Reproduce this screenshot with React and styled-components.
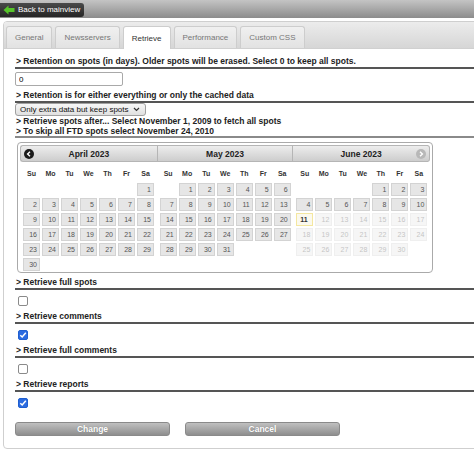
import React from 'react'
import styled, { createGlobalStyle, css } from 'styled-components'

const Global = createGlobalStyle`
  html, body { margin:0; padding:0; background:#fff; overflow:hidden; }
  body { font-family:"Liberation Sans", Arial, sans-serif; font-size:8px; color:#222; }
`
const TopBar = styled.div`
  height:18px;
  background:linear-gradient(#c4c4c4, #8c8c8c);
  display:flex;
  align-items:center;
`
const BackButton = styled.div`
  height:14px;
  width:84px;
  margin-top:1px;
  background:linear-gradient(#4a4a4a, #262626);
  border-radius:0 3px 3px 0;
  display:flex;
  align-items:center;
  gap:3px;
  padding-left:3px;
  box-sizing:border-box;
  color:#fff;
  font-size:8px;
`
const Panel = styled.div`
  margin:3px -12px 0 3px;
  border:1px solid #cfcfcf;
  border-radius:4px;
  padding:0 0 12px 0;
`
const TabBar = styled.div`
  height:27px;
  background:linear-gradient(#ececec, #d6d6d6);
  border-bottom:1px solid #d0d0d0;
  border-radius:3px 3px 0 0;
  display:flex;
  align-items:flex-end;
  gap:3px;
  padding-left:2px;
  box-sizing:border-box;
`
const Tab = styled.div`
  padding:0 8px;
  display:flex;
  align-items:center;
  border:1px solid #cdcdcd;
  border-bottom:none;
  border-radius:3px 3px 0 0;
  background:${p => (p.$active ? '#fff' : 'linear-gradient(#f0f0f0, #e2e2e2)')};
  color:${p => (p.$active ? '#333' : '#777')};
  margin-bottom:${p => (p.$active ? '-1px' : '0')};
  height:${p => (p.$active ? '23px' : '22px')};
  box-sizing:border-box;
`
const Content = styled.div`
  padding:6px 0 0 11px;
`
const Heading = styled.div`
  font-weight:bold;
  font-size:8.5px;
  line-height:${p => p.$lh || 12}px;
  color:#222;
  border-bottom:2px solid ${p => p.$light ? '#8a8a8a' : '#555'};
  padding-left:1px;
`
const Input = styled.input`
  display:block;
  width:108px;
  height:14px;
  box-sizing:border-box;
  margin:3px 0 3px 0;
  border:1px solid #a9a9a9;
  border-radius:2px;
  font:8px "Liberation Sans", Arial, sans-serif;
  padding:0 3px;
`
const SelectBox = styled.div`
  width:131px;
  height:13px;
  box-sizing:border-box;
  border:1px solid #a0a0a0;
  border-radius:3px;
  background:linear-gradient(#f7f7f7, #e0e0e0);
  display:flex;
  align-items:center;
  justify-content:space-between;
  padding:0 5px 0 4px;
  font-size:8px;
  color:#111;
`
const Calendar = styled.div`
  margin:4px 0 0 2px;
  width:416px;
  box-sizing:border-box;
  border:1px solid #aaa;
  border-radius:4px;
  padding:2px 2px 1px 2px;
  display:flex;
`
const Month = styled.div`
  flex:1;
`
const MonthHeader = styled.div`
  position:relative;
  height:17px;
  box-sizing:border-box;
  border:1px solid #b5b5b5;
  ${p => p.$pos === 'first' && css`border-radius:3px 0 0 3px; border-right:none;`}
  ${p => p.$pos === 'last' && css`border-radius:0 3px 3px 0; border-left:none;`}
  background:linear-gradient(#ededed, #cdcdcd);
  display:flex;
  align-items:center;
  justify-content:center;
  font-weight:bold;
  font-size:8.5px;
  color:#222;
`
const NavIcon = styled.div`
  position:absolute;
  top:3px;
  ${p => p.$side}:3px;
  width:10px;
  height:10px;
  border-radius:50%;
  background:${p => p.$disabled ? '#b8b8b8' : '#1a1a1a'};
  display:flex;
  align-items:center;
  justify-content:center;
`
const Grid = styled.div`
  display:grid;
  grid-template-columns:repeat(7, 17px);
  grid-auto-rows:13px;
  column-gap:2px;
  row-gap:2px;
  margin-left:3px;
`
const DayNames = styled(Grid)`
  grid-auto-rows:16px;
  margin-top:3px;
  margin-bottom:2px;
`
const DayName = styled.div`
  font-weight:bold;
  font-size:7px;
  display:flex;
  align-items:center;
  justify-content:center;
  color:#333;
`
const Day = styled.div`
  border:1px solid ${p => p.$today ? '#f4e7a0' : '#d3d3d3'};
  background:${p => p.$today ? '#fbf9ee' : '#e6e6e6'};
  color:${p => p.$today ? '#363636' : '#555'};
  font-size:7px;
  text-align:right;
  padding-right:2px;
  line-height:11px;
  opacity:${p => p.$disabled ? 0.35 : 1};
  ${p => p.$today && css`text-align:left; padding-left:3px; font-weight:bold; color:#333;`}
`
const Empty = styled.div``
const Spacer = styled.div`
  height:3px;
`
const CheckBox = styled.div`
  width:10px;
  height:10px;
  box-sizing:border-box;
  margin:6px 0 4px 3px;
  border-radius:2px;
  border:1px solid ${p => p.$checked ? '#1f5fd0' : '#8a8a8a'};
  background:${p => p.$checked ? '#2b6be0' : '#fff'};
  display:flex;
  align-items:center;
  justify-content:center;
`
const Buttons = styled.div`
  display:flex;
  gap:15px;
  margin-top:14px;
`
const Button = styled.div`
  width:155px;
  height:14px;
  box-sizing:border-box;
  border:1px solid #8a8a8a;
  border-radius:3px;
  background:linear-gradient(#c0c0c0, #8e8e8e);
  color:#fff;
  font-weight:bold;
  font-size:8.5px;
  display:flex;
  align-items:center;
  justify-content:center;
  text-shadow:0 0 1px rgba(0,0,0,.3);
`

const months = [
  { name: 'April 2023', start: 6, days: 30 },
  { name: 'May 2023', start: 1, days: 31 },
  { name: 'June 2023', start: 4, days: 30 },
]
const dayNames = ['Su', 'Mo', 'Tu', 'We', 'Th', 'Fr', 'Sa']

const MonthView = ({ m, pos }) => {
  const cells = []
  for (let i = 0; i < m.start; i++) cells.push(<Empty key={'e' + i} />)
  for (let d = 1; d <= m.days; d++) {
    const june = m.name.startsWith('June')
    cells.push(
      <Day key={d} $today={june && d === 11} $disabled={june && d > 11}>{d}</Day>
    )
  }
  return (
    <Month>
      <MonthHeader $pos={pos}>
        {pos === 'first' && (
          <NavIcon $side="left">
            <svg width="6" height="6" viewBox="0 0 6 6"><path d="M4 0.8 L1.6 3 L4 5.2" stroke="#fff" strokeWidth="1.4" fill="none" /></svg>
          </NavIcon>
        )}
        {m.name}
        {pos === 'last' && (
          <NavIcon $side="right" $disabled>
            <svg width="6" height="6" viewBox="0 0 6 6"><path d="M2 0.8 L4.4 3 L2 5.2" stroke="#fff" strokeWidth="1.4" fill="none" /></svg>
          </NavIcon>
        )}
      </MonthHeader>
      <DayNames>
        {dayNames.map(n => <DayName key={n}>{n}</DayName>)}
      </DayNames>
      <Grid>{cells}</Grid>
    </Month>
  )
}

const Check = ({ checked }) => (
  <CheckBox $checked={checked}>
    {checked && (
      <svg width="8" height="8" viewBox="0 0 8 8"><path d="M1.3 4.2 L3.2 6 L6.8 1.8" stroke="#fff" strokeWidth="1.5" fill="none" /></svg>
    )}
  </CheckBox>
)

const App = () => {
  return (
    <>
      <Global />
      <TopBar>
        <BackButton>
          <svg width="12" height="10" viewBox="0 0 12 10">
            <path d="M0.5 5 L5.5 0.5 L5.5 3 L11.5 3 L11.5 7 L5.5 7 L5.5 9.5 Z" fill="#56c42a" />
          </svg>
          Back to mainview
        </BackButton>
      </TopBar>
      <Panel>
        <TabBar>
          <Tab>General</Tab>
          <Tab>Newsservers</Tab>
          <Tab $active>Retrieve</Tab>
          <Tab>Performance</Tab>
          <Tab>Custom CSS</Tab>
        </TabBar>
        <Content>
          <Heading>&gt; Retention on spots (in days). Older spots will be erased. Select 0 to keep all spots.</Heading>
          <Input defaultValue="0" />
          <Heading>&gt; Retention is for either everything or only the cached data</Heading>
          <SelectBox>
            Only extra data but keep spots
            <svg width="7" height="5" viewBox="0 0 7 5"><path d="M1 1 L3.5 3.5 L6 1" stroke="#333" strokeWidth="1.2" fill="none" /></svg>
          </SelectBox>
          <Heading $lh={10} $light>
            &gt; Retrieve spots after... Select November 1, 2009 to fetch all spots<br />
            &gt; To skip all FTD spots select November 24, 2010
          </Heading>
          <Calendar>
            <MonthView m={months[0]} pos="first" />
            <MonthView m={months[1]} pos="mid" />
            <MonthView m={months[2]} pos="last" />
          </Calendar>
          <Spacer />
          <Heading>&gt; Retrieve full spots</Heading>
          <Check />
          <Heading>&gt; Retrieve comments</Heading>
          <Check checked />
          <Heading>&gt; Retrieve full comments</Heading>
          <Check />
          <Heading>&gt; Retrieve reports</Heading>
          <Check checked />
          <Buttons>
            <Button>Change</Button>
            <Button>Cancel</Button>
          </Buttons>
        </Content>
      </Panel>
    </>
  )
}

export default App
